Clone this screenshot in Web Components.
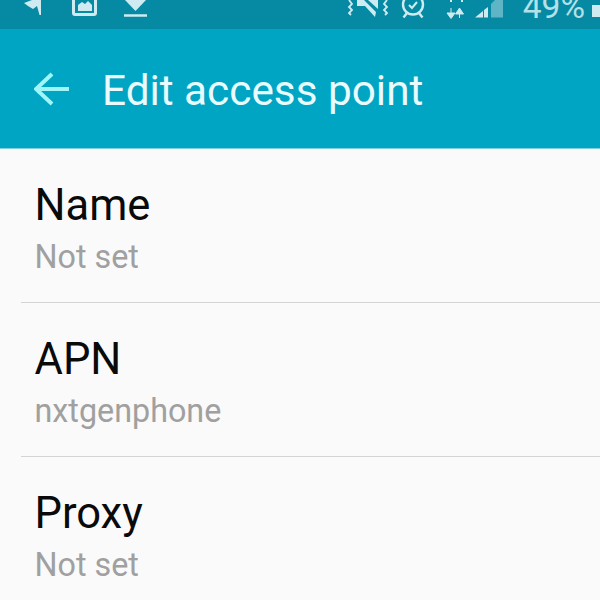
<!doctype html>
<html><head><meta charset="utf-8"><style>
html,body{margin:0;padding:0;width:600px;height:600px;overflow:hidden;background:#fafafa;font-family:Roboto,sans-serif}
</style></head><body>
<status-bar></status-bar>
<app-bar title="Edit access point"></app-bar>
<pref-row name="Name" value="Not set"></pref-row>
<pref-row name="APN" value="nxtgenphone"></pref-row>
<pref-row name="Proxy" value="Not set" last></pref-row>
<script>
class StatusBar extends HTMLElement{constructor(){super();this.attachShadow({mode:'open'}).innerHTML=`<style>
:host{display:flex;height:29px;background:#068aa3;overflow:hidden;align-items:flex-start;box-sizing:border-box}
svg{display:block;flex:none}
.l{display:flex;align-items:flex-start;padding-left:24px}
.r{display:flex;align-items:flex-start;margin-left:auto}
.pct{font:33.5px/34px Roboto,sans-serif;color:#b5e0e8;height:34px;flex:none;margin:-10px 0 0 20px}
.batt{width:8px;height:12px;background:#cfeaf0;margin:5px 0 0 7px;flex:none}
</style>
<div class="l">
<svg width="17" height="18" viewBox="0 0 17 18"><path d="M0 3L8 0H17V15H15.500L13 6 9 9 4 6Z" fill="#cfeaf0"/></svg>
<svg width="25" height="18" viewBox="0 0 25 18" style="margin-left:31px"><path d="M1.500 0V13a1.500 1.500 0 0 0 1.500 1.500H22a1.500 1.500 0 0 0 1.500-1.500V0" fill="none" stroke="#cfeaf0" stroke-width="3"/><path d="M6 11V5l4-3 3 2 3-3 4 4v6z" fill="#cfeaf0"/></svg>
<svg width="23" height="18" viewBox="0 0 23 18" style="margin-left:27px"><path d="M1 0H22L11.500 11z" fill="#cfeaf0"/><path d="M0 15.500H23" stroke="#cfeaf0" stroke-width="2.500"/></svg>
</div>
<div class="r">
<svg width="42" height="20" viewBox="0 0 42 20"><path d="M2 0L5 4 2 7 5 10 2 13 4 15M40 0L37 4 40 7 37 10 40 13 38 15" fill="none" stroke="#cfeaf0" stroke-width="1.800"/><path d="M10 0V6H18L28 17 29 12 17 0Z" fill="#cfeaf0"/><path d="M21 0L31 9V0Z" fill="#cfeaf0"/></svg>
<svg width="24" height="20" viewBox="0 0 24 20" style="margin-left:12px"><circle cx="12" cy="4.500" r="10" fill="none" stroke="#cfeaf0" stroke-width="2.400"/><path d="M8 5l3 3 5-6" fill="none" stroke="#cfeaf0" stroke-width="2"/><path d="M2.500 17.500L6 13M21.500 17.500L18 13" stroke="#cfeaf0" stroke-width="2.400"/></svg>
<svg width="19" height="20" viewBox="0 0 19 20" style="margin-left:21px"><path d="M5 8V14M1 13H9L5 18.500zM13.500 18V13M9.500 14H17.500L13.500 8z" fill="#cfeaf0" stroke="#cfeaf0" stroke-width="1"/><path d="M5 0V2M16 0V2" stroke="#cfeaf0" stroke-width="2"/></svg>
<svg width="28" height="20" viewBox="0 0 28 20" style="margin-left:10px"><path d="M0 17.500L8 11V17.500z" fill="#cfeaf0"/><path d="M9 17.500V10L13 7V17.500z" fill="#cfeaf0"/><path d="M16 17.500V4L20 0H28V17.500z" fill="#5fb5c6"/></svg>
<span class="pct">49%</span>
<span class="batt"></span>
</div>`}}
customElements.define('status-bar',StatusBar);
class AppBar extends HTMLElement{constructor(){super();this.attachShadow({mode:'open'}).innerHTML=`<style>
:host{display:flex;height:120px;background:#00a5c4;align-items:center;box-sizing:border-box;padding:0 0 0 34px;border-bottom:1px solid #7fd0e0}
svg{display:block;flex:none}
.t{margin-left:33px;font:42.300px/1 Roboto,sans-serif;color:#e9fbfd;white-space:nowrap;padding-top:6px}
</style>
<svg width="35" height="34" viewBox="0 0 35 34"><path d="M35 17H3M18 2L2 17l16 15" fill="none" stroke="#a0f6f6" stroke-width="4"/></svg>
<span class="t">${this.getAttribute('title')}</span>`}}
customElements.define('app-bar',AppBar);
class PrefRow extends HTMLElement{constructor(){super();const last=this.hasAttribute('last');this.attachShadow({mode:'open'}).innerHTML=`<style>
:host{display:block;padding-left:21px;background:#fafafa}
.b{height:154px;box-sizing:border-box;padding:31px 0 0 13.500px;${last?'':'border-bottom:1px solid #d4d4d4'}}
.n{font:43.500px/52px Roboto,sans-serif;color:#0a0a0a}
.v{font:32.300px/50px Roboto,sans-serif;color:#a0a0a0}
</style><div class="b"><div class="n">${this.getAttribute('name')}</div><div class="v">${this.getAttribute('value')}</div></div>`}}
customElements.define('pref-row',PrefRow);
</script></body></html>
